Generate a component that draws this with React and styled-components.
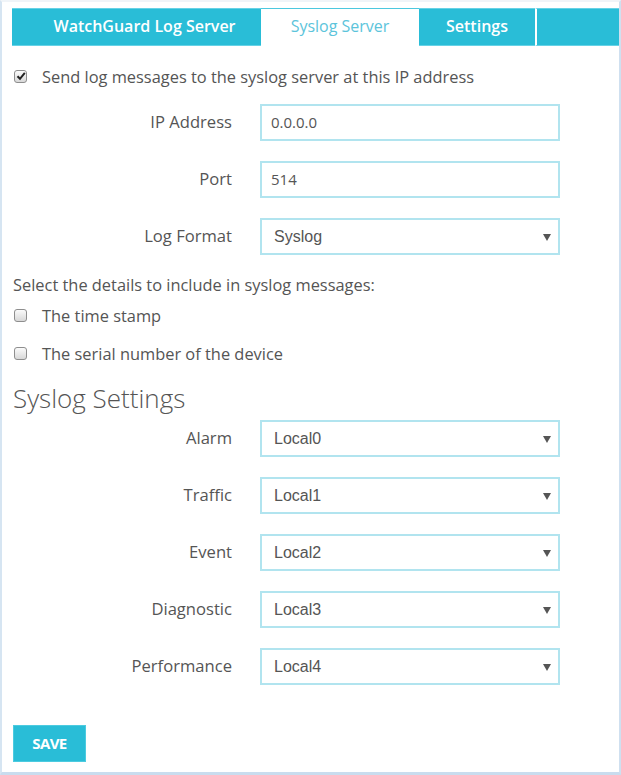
import styled, { createGlobalStyle } from 'styled-components';

const GlobalStyle = createGlobalStyle`
  body {
    margin: 0;
    background: #fff;
    font-family: "Open Sans", "Liberation Sans", sans-serif;
    color: #555;
  }
`;

const Frame = styled.div`
  width: 621px;
  height: 775px;
  box-sizing: border-box;
  background: #fff;
  border-top: 2px solid #f0f4f8;
  border-left: 2px solid #d6e5f2;
  border-right: 2px solid #cfe0f0;
  border-bottom: 3px solid #c9dcee;
  padding: 6px 0 0 10px;
`;

const TabBar = styled.div`
  display: flex;
  height: 38px;
`;

const Tab = styled.div`
  box-sizing: border-box;
  width: ${(p) => (p.$width ? `${p.$width}px` : 'auto')};
  flex: ${(p) => (p.$grow ? 1 : 'none')};
  display: flex;
  align-items: center;
  justify-content: center;
  font-size: 16px;
  font-weight: ${(p) => (p.$active ? 500 : 600)};
  color: ${(p) => (p.$active ? '#5cc4db' : '#fff')};
  background: ${(p) => (p.$active ? '#fff' : '#29bdd7')};
  border-top: 1px solid ${(p) => (p.$active ? '#4cc8df' : '#66d2e6')};
  border-bottom: 1px solid ${(p) => (p.$active ? '#fff' : '#66d2e6')};
  border-left: ${(p) => (p.$divider ? '2px solid #fff' : 'none')};
  padding: 0 0 2px ${(p) => p.$indent || 0}px;
`;

const Body = styled.div`
  padding-left: 1px;
  display: flex;
  flex-direction: column;
`;

const CheckRow = styled.label`
  display: flex;
  align-items: center;
  height: 20px;
  margin-top: ${(p) => p.$top}px;
  font-size: 16.4px;
  gap: 15px;
  padding-left: 1px;
`;

const Box = styled.span`
  box-sizing: border-box;
  flex: none;
  width: 13px;
  height: 13px;
  border: 1px solid #8e8e8e;
  border-radius: 3px;
  background: linear-gradient(#fbfbfb, #d8d8d8);
  display: flex;
  align-items: center;
  justify-content: center;
`;

const Check = ({ checked }) => (
  <Box>
    {checked && (
      <svg width="10" height="10" viewBox="0 0 10 10">
        <path d="M1.5 5.2 L4 7.8 L8.8 1.8" fill="none" stroke="#222" strokeWidth="2" />
      </svg>
    )}
  </Box>
);

const FieldRow = styled.div`
  display: grid;
  grid-template-columns: 219px 300px;
  column-gap: 28px;
  align-items: center;
  margin-top: ${(p) => p.$top}px;
`;

const Label = styled.div`
  text-align: right;
  font-size: 16.6px;
  padding-bottom: 2px;
`;

const TextInput = styled.input`
  box-sizing: border-box;
  width: 300px;
  height: 37px;
  border: 2px solid #b1e4ef;
  padding: 0 9px 2px;
  font-family: "Open Sans", sans-serif;
  font-size: 15px;
  color: #555;
  outline: none;
`;

const SelectWrap = styled.div`
  position: relative;
  width: 300px;
  height: 37px;
`;

const Select = styled.select`
  appearance: none;
  box-sizing: border-box;
  width: 100%;
  height: 100%;
  border: 2px solid #b1e4ef;
  border-radius: 0;
  background: #fff;
  padding: 0 0 0 12px;
  font-family: "Liberation Sans", Arial, sans-serif;
  font-size: 16px;
  color: #555;
  outline: none;
`;

const Caret = styled.span`
  position: absolute;
  right: 9px;
  top: 16px;
  width: 0;
  height: 0;
  border-left: 4px solid transparent;
  border-right: 4px solid transparent;
  border-top: 7px solid #555;
  pointer-events: none;
`;

const Note = styled.div`
  font-size: 16.4px;
  height: 20px;
  line-height: 20px;
  margin-top: 20px;
`;

const Heading = styled.h2`
  margin: 20px 0 0;
  font-family: "Open Sans", sans-serif;
  font-weight: 300;
  font-size: 26px;
  line-height: 30px;
  color: #555;
`;

const SaveButton = styled.button`
  margin-top: 40px;
  width: 73px;
  height: 37px;
  border: 1px solid #4ccbe0;
  background: #29bdd7;
  color: #fff;
  font-family: "Open Sans", sans-serif;
  font-weight: 700;
  font-size: 15px;
  letter-spacing: -0.6px;
  align-self: flex-start;
  padding: 0 0 1px;
`;

const Dropdown = ({ value, options }) => (
  <SelectWrap>
    <Select defaultValue={value}>
      {options.map((o) => (
        <option key={o}>{o}</option>
      ))}
    </Select>
    <Caret />
  </SelectWrap>
);

const facilities = ['Local0', 'Local1', 'Local2', 'Local3', 'Local4', 'Local5', 'Local6', 'Local7'];

const syslogRows = [
  ['Alarm', 'Local0'],
  ['Traffic', 'Local1'],
  ['Event', 'Local2'],
  ['Diagnostic', 'Local3'],
  ['Performance', 'Local4'],
];

export default function App() {
  return (
    <>
      <GlobalStyle />
      <Frame>
        <TabBar>
          <Tab $width={249} $indent={16}>WatchGuard Log Server</Tab>
          <Tab $width={158} $active>Syslog Server</Tab>
          <Tab $width={116}>Settings</Tab>
          <Tab $grow $divider />
        </TabBar>
        <Body>
          <CheckRow $top={20}>
            <Check checked />
            Send log messages to the syslog server at this IP address
          </CheckRow>

          <FieldRow $top={18}>
            <Label>IP Address</Label>
            <TextInput defaultValue="0.0.0.0" />
          </FieldRow>
          <FieldRow $top={20}>
            <Label>Port</Label>
            <TextInput defaultValue="514" />
          </FieldRow>
          <FieldRow $top={20}>
            <Label>Log Format</Label>
            <Dropdown value="Syslog" options={['Syslog', 'IBM LEEF']} />
          </FieldRow>

          <Note>Select the details to include in syslog messages:</Note>
          <CheckRow $top={10}>
            <Check />
            The time stamp
          </CheckRow>
          <CheckRow $top={18}>
            <Check />
            The serial number of the device
          </CheckRow>

          <Heading>Syslog Settings</Heading>
          {syslogRows.map(([label, value], i) => (
            <FieldRow key={label} $top={i === 0 ? 7 : 20}>
              <Label>{label}</Label>
              <Dropdown value={value} options={facilities} />
            </FieldRow>
          ))}

          <SaveButton>SAVE</SaveButton>
        </Body>
      </Frame>
    </>
  );
}
